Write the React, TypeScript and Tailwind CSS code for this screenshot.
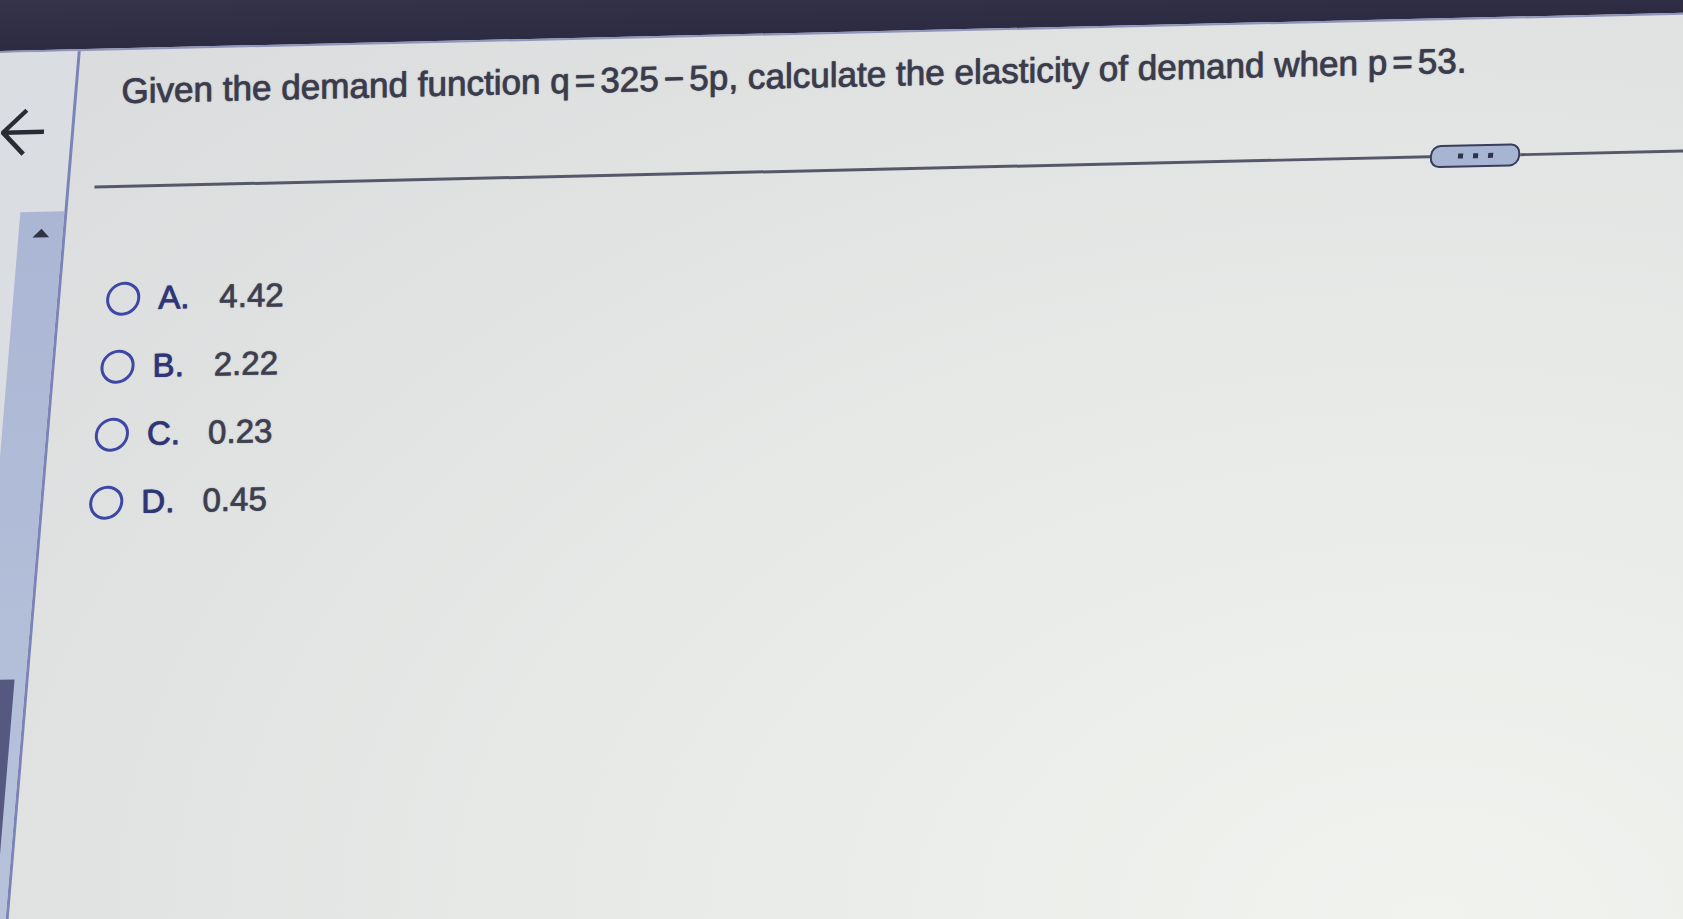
import React from "react";

const options = [
  { label: "A.", value: "4.42" },
  { label: "B.", value: "2.22" },
  { label: "C.", value: "0.23" },
  { label: "D.", value: "0.45" },
];

export default function App() {
  return (
    <div className="relative w-[1683px] h-[919px] overflow-hidden bg-[radial-gradient(ellipse_at_85%_100%,#f1f3ef_0%,#e7e9e7_45%,#d8dadc_100%)] font-['Liberation_Sans',Arial,sans-serif]">
      <div className="w-[1800px] h-[1020px] origin-top-left [transform:skewX(-4.75deg)_skewY(-1.3deg)] flex flex-col">
        {/* dark bezel band */}
        <div className="h-[51px] shrink-0 bg-[linear-gradient(180deg,#36344b_0%,#2d2b41_100%)]" />
        <div className="h-[2px] shrink-0 bg-[#8f94bb]" />

        <div className="flex flex-1">
          {/* left sidebar */}
          <div className="w-[85px] shrink-0 flex flex-col border-r-[3px] border-[#7a84b6] bg-[#dadde2]">
            <div className="h-[160px] shrink-0 flex items-center pl-[12px]">
              <svg width="43" height="48" viewBox="0 0 43 48" fill="none">
                <polyline points="24,2 2,24 24,46" stroke="#2b2b35" strokeWidth="4.5" strokeLinejoin="miter" />
                <line x1="3" y1="24" x2="43" y2="24" stroke="#2b2b35" strokeWidth="4.5" />
              </svg>
            </div>
            <div className="ml-[38px] flex-1 flex flex-col bg-[linear-gradient(180deg,#aab6d4_0%,#b4bfd9_60%,#b9c3da_100%)]">
              <div className="h-[468px] shrink-0 flex justify-center pt-[17px]">
                <svg width="17" height="9" viewBox="0 0 17 9">
                  <polygon points="8.5,0 17,9 0,9" fill="#303344" />
                </svg>
              </div>
              <div className="flex-1 flex">
                <div className="w-[33px] bg-[#555980]" />
                <div className="flex-1" />
              </div>
            </div>
          </div>

          {/* main content */}
          <div className="flex-1 flex flex-col pt-[23px]">
            <div className="pl-[44px] text-[35px] leading-[35px] text-[#3a3b4b] whitespace-nowrap">
              <span className="inline-block [transform:skewX(4.75deg)] [-webkit-text-stroke:0.7px_#3a3b4b] [text-shadow:0_0_1.5px_rgba(50,52,72,0.6)]">
                Given the demand function q
                <span className="mx-[5px]">=</span>
                325
                <span className="mx-[5px]">−</span>
                5p, calculate the elasticity of demand when p
                <span className="mx-[5px]">=</span>
                53.
              </span>
            </div>

            <div className="mt-[66px] h-[24px] ml-[25px] flex items-center">
              <div className="w-[1333px] h-[3px] bg-[#555869]" />
              <div className="w-[90px] h-[23px] shrink-0 rounded-[10px] border-[2.5px] border-[#383d5c] bg-[#a7b5d2] flex items-center justify-center gap-[10px]">
                <div className="w-[5px] h-[5px] bg-[#2e334d]" />
                <div className="w-[5px] h-[5px] bg-[#2e334d]" />
                <div className="w-[5px] h-[5px] bg-[#2e334d]" />
              </div>
              <div className="flex-1 h-[3px] bg-[#555869]" />
            </div>

            <div className="mt-[67px] flex flex-col pl-[46px]">
              {options.map((o) => (
                <div key={o.label} className="h-[68px] flex items-center">
                  <div className="w-[34px] h-[34px] shrink-0 rounded-full border-[3.5px] border-[#3c48a4]" />
                  <div className="ml-[18px] w-[61px] text-[33px] leading-[34px] text-[#2e3574]">
                    <span className="inline-block [transform:skewX(4.75deg)] [-webkit-text-stroke:0.8px_#2e3574] [text-shadow:0_0_1.5px_rgba(47,54,118,0.6)]">
                      {o.label}
                    </span>
                  </div>
                  <div className="text-[33px] leading-[34px] text-[#3d3f4e]">
                    <span className="inline-block [transform:skewX(4.75deg)] [-webkit-text-stroke:0.6px_#3d3f4e] [text-shadow:0_0_1.5px_rgba(50,52,72,0.6)]">
                      {o.value}
                    </span>
                  </div>
                </div>
              ))}
            </div>
          </div>
        </div>
      </div>
    </div>
  );
}
